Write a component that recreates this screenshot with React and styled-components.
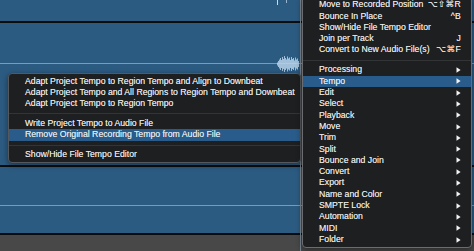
import React from "react";
import styled, { createGlobalStyle } from "styled-components";

const LANE_BLUE = "#2c5b82";
const MENU_BG = "#1e1f21";
const HILITE = "#295c8a";
const TEXT = "#e6e6e6";

const GlobalStyle = createGlobalStyle`
  html, body {
    margin: 0;
    padding: 0;
    background: #484848;
  }
  body {
    font-family: "Liberation Sans", "DejaVu Sans", Arial, sans-serif;
    -webkit-font-smoothing: antialiased;
  }
`;

const Stage = styled.div`
  position: relative;
  width: 474px;
  height: 251px;
  overflow: hidden;
  display: flex;
  flex-direction: row;
  background: #484848;
`;

const Tracks = styled.div`
  width: 300px;
  display: flex;
  flex-direction: column;
`;

const Gutter = styled.div`
  flex: 1;
  display: flex;
  flex-direction: column;
  border-left: 1px solid #7c8a96;
`;

const Lane = styled.div`
  height: ${(props) => props.h}px;
  background: ${(props) => props.bg || LANE_BLUE};
`;

const Rule = styled.div`
  height: ${(props) => props.h || 1}px;
  background: ${(props) => props.color};
`;

const Floor = styled.div`
  flex: 1;
  background: #484848;
`;

// menus float over the arrange area
const Menu = styled.div`
  position: absolute;
  left: ${(props) => props.left}px;
  top: ${(props) => props.top}px;
  width: ${(props) => props.width}px;
  box-sizing: border-box;
  background: ${MENU_BG};
  border: 1px solid ${(props) => props.edge};
  border-radius: 4px;
  padding: ${(props) => props.padTop}px 0 ${(props) => props.padBottom}px;
  box-shadow: 0 2px 6px rgba(0, 0, 0, 0.45);
`;

const Row = styled.div`
  height: 11.3px;
  display: flex;
  align-items: center;
  padding: 0 10px 0 16px;
  font-size: 8.7px;
  line-height: 11.3px;
  color: ${TEXT};
  white-space: nowrap;
  background: ${(props) => (props.active ? HILITE : "transparent")};
  text-shadow: 0 0 0.5px rgba(255, 255, 255, 0.7);
`;

const Label = styled.span`
  flex: 1;
`;

const Shortcut = styled.span`
  font-size: 8.6px;
  letter-spacing: 0.3px;
`;

const Separator = styled.div`
  height: 8.7px;
  display: flex;
  align-items: center;
  &::after {
    content: "";
    flex: 1;
    height: 1px;
    background: #333436;
  }
`;

const Arrow = () => (
  <svg width="5" height="6" viewBox="0 0 5 6">
    <polygon points="0.5,0.3 4.6,3 0.5,5.7" fill="#f2f2f2" />
  </svg>
);

const Wave = styled.svg`
  position: absolute;
  left: ${(props) => props.x}px;
  top: ${(props) => props.y}px;
`;

const waveBars = [3, 6, 9, 12, 8, 14, 10, 16, 12, 9, 15, 11, 13, 8, 14, 10, 12, 7, 13, 9, 11, 6];

function Waveform({ x, y }) {
  return (
    <Wave x={x} y={y} width="24" height="20" viewBox="0 0 24 20">
      {waveBars.map((h, i) => (
        <rect
          key={i}
          x={i + 1}
          y={10 - h / 2}
          width="1"
          height={h}
          fill="#b8d2ea"
          opacity={0.85}
        />
      ))}
    </Wave>
  );
}

function Ticks({ x, y }) {
  return (
    <Wave x={x} y={y} width="14" height="6" viewBox="0 0 14 6">
      <rect x="1" y="0" width="1" height="5" fill="#c4dbef" />
      <rect x="10" y="0" width="1" height="3" fill="#c4dbef" opacity="0.7" />
    </Wave>
  );
}

const tempoItems = [
  { label: "Adapt Project Tempo to Region Tempo and Align to Downbeat" },
  { label: "Adapt Project Tempo and All Regions to Region Tempo and Downbeat" },
  { label: "Adapt Project Tempo to Region Tempo" },
  { sep: true },
  { label: "Write Project Tempo to Audio File" },
  { label: "Remove Original Recording Tempo from Audio File", active: true },
  { sep: true },
  { label: "Show/Hide File Tempo Editor" },
];

const mainItems = [
  { label: "Move to Recorded Position", key: "⌥⇧⌘R" },
  { label: "Bounce In Place", key: "^B" },
  { label: "Show/Hide File Tempo Editor" },
  { label: "Join per Track", key: "J" },
  { label: "Convert to New Audio File(s)", key: "⌥⌘F" },
  { sep: true },
  { label: "Processing", sub: true },
  { label: "Tempo", sub: true, active: true },
  { label: "Edit", sub: true },
  { label: "Select", sub: true },
  { label: "Playback", sub: true },
  { label: "Move", sub: true },
  { label: "Trim", sub: true },
  { label: "Split", sub: true },
  { label: "Bounce and Join", sub: true },
  { label: "Convert", sub: true },
  { label: "Export", sub: true },
  { label: "Name and Color", sub: true },
  { label: "SMPTE Lock", sub: true },
  { label: "Automation", sub: true },
  { label: "MIDI", sub: true },
  { label: "Folder", sub: true },
];

function MenuItems({ items }) {
  return items.map((item, i) =>
    item.sep ? (
      <Separator key={i} />
    ) : (
      <Row key={i} active={item.active}>
        <Label>{item.label}</Label>
        {item.key && <Shortcut>{item.key}</Shortcut>}
        {item.sub && <Arrow />}
      </Row>
    )
  );
}

function LaneStack() {
  return (
    <>
      <Lane h={21} />
      <Rule h={2} color="#0b0c0d" />
      <Lane h={40} />
      <Rule color="#6f9fc8" />
      <Lane h={101} />
      <Rule h={2} color="#0b0c0d" />
      <Lane h={38} />
      <Rule color="#6f9fc8" />
      <Lane h={27} />
      <Rule h={2} color="#0b0c0d" />
      <Floor />
    </>
  );
}

export default function App() {
  return (
    <>
      <GlobalStyle />
      <Stage>
        <Tracks>
          <LaneStack />
        </Tracks>
        <Gutter>
          <LaneStack />
        </Gutter>

        <Waveform x={276} y={54} />
        <Ticks x={276} y={0} />

        <Menu left={8} top={73.3} width={293} edge="#55585c" padTop={1.3} padBottom={1.5}>
          <MenuItems items={tempoItems} />
        </Menu>

        <Menu left={302} top={-4} width={170} edge="#6a6c70" padTop={2.3} padBottom={1.4}>
          <MenuItems items={mainItems} />
        </Menu>
      </Stage>
    </>
  );
}
